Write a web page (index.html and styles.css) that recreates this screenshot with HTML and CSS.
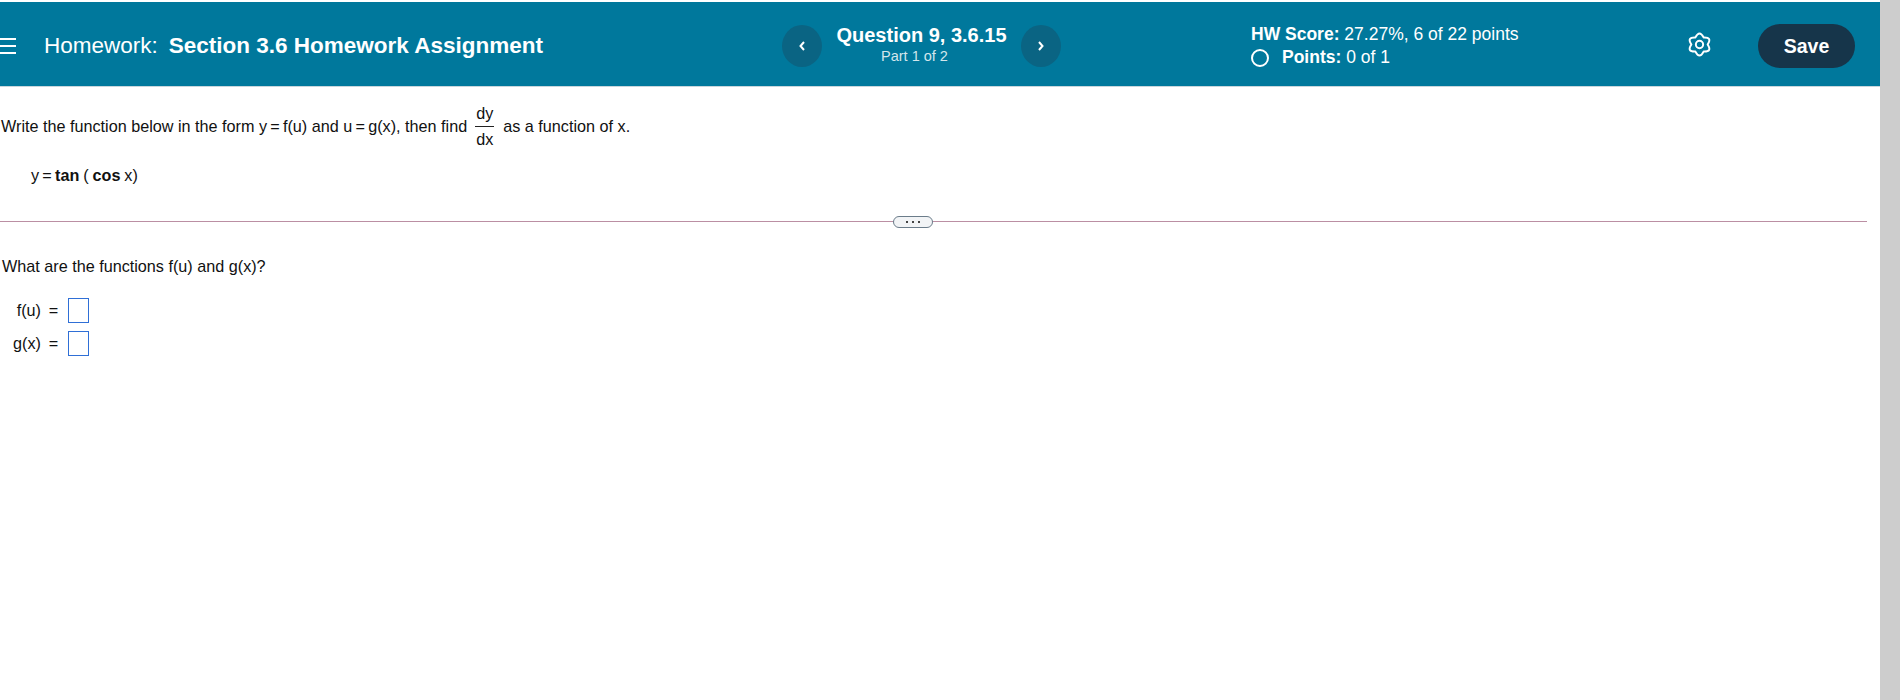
FILE: index.html
```html
<!DOCTYPE html>
<html lang="en">
<head>
    <meta charset="UTF-8">
    <title>Section 3.6 Homework Assignment</title>
    <link rel="stylesheet" href="styles.css">
</head>
<body>
    <div class="page">
        <header class="topbar">
            <div class="menu-icon"><span></span><span></span><span></span></div>
            <div class="hw-title">Homework:<strong>Section 3.6 Homework Assignment</strong></div>
            <nav class="question-nav">
                <button class="nav-btn">
                    <svg width="10" height="12" viewBox="0 0 10 12"><path d="M7 2 L3.5 6 L7 10" fill="none" stroke="#fff" stroke-width="2"/></svg>
                </button>
                <div class="question-info">
                    <div class="question-name">Question 9, 3.6.15</div>
                    <div class="question-part">Part 1 of 2</div>
                </div>
                <button class="nav-btn">
                    <svg width="10" height="12" viewBox="0 0 10 12"><path d="M3 2 L6.5 6 L3 10" fill="none" stroke="#fff" stroke-width="2"/></svg>
                </button>
            </nav>
            <div class="score">
                <div><strong>HW Score:</strong> 27.27%, 6 of 22 points</div>
                <div class="points"><span class="ring"></span><span><strong>Points:</strong> 0 of 1</span></div>
            </div>
            <svg class="gear" width="25" height="25" viewBox="0 0 24 24" fill="none" stroke="#fff" stroke-width="1.9" stroke-linejoin="round">
                <path d="M8.1 5.2 Q12 -2.5 15.9 5.2 Q24.5 4.8 19.8 12 Q24.5 19.2 15.9 18.8 Q12 26.5 8.1 18.8 Q-0.5 19.2 4.2 12 Q-0.5 4.8 8.1 5.2 Z"/>
                <circle cx="12" cy="12" r="3.5"/>
            </svg>
            <button class="save-btn">Save</button>
        </header>

        <section class="question">
            <div class="prompt">
                <span>Write the function below in the form y&#8201;=&#8201;f(u) and u&#8201;=&#8201;g(x), then find</span>
                <span class="frac"><span class="frac-top">dy</span><span>dx</span></span>
                <span>as a function of x.</span>
            </div>
            <div class="formula">y&#8201;=&#8201;<b>tan</b> ( <b>cos</b> x)</div>
        </section>

        <div class="divider"><button class="dots"><i></i><i></i><i></i></button></div>

        <section class="answer">
            <p class="ask">What are the functions f(u) and g(x)?</p>
            <div class="answer-row"><span class="answer-label">f(u)</span><span class="eq">=</span><span class="answer-box"></span></div>
            <div class="answer-row"><span class="answer-label">g(x)</span><span class="eq">=</span><span class="answer-box"></span></div>
        </section>
    </div>
    <div class="scrollbar"></div>
</body>
</html>
```

FILE: styles.css
```css
html, body {
    height: 100%;
}

body {
    margin: 0;
    display: flex;
    overflow: hidden;
    background-color: #fff;
    color: #111;
    font-family: 'Liberation Sans', Arial, sans-serif;
    font-size: 16.2px;
}

.page {
    width: 1880px;
    padding-top: 2px;
}

.scrollbar {
    width: 20px;
    background-color: #cdcdcd;
}

.topbar {
    height: 85px;
    padding-top: 4px;
    box-sizing: border-box;
    display: flex;
    align-items: center;
    background-color: #00789c;
    color: #fff;
    border-bottom: 1px solid #c9d6dc;
}

.menu-icon {
    width: 16px;
    display: flex;
    flex-direction: column;
    gap: 5px;
}

.menu-icon span {
    height: 2px;
    background-color: #fff;
}

.hw-title {
    width: 738px;
    margin-left: 28px;
    font-size: 22.5px;
}

.hw-title strong {
    margin-left: 11px;
}

.question-nav {
    width: 279px;
    display: flex;
    align-items: center;
    justify-content: space-between;
}

.nav-btn {
    width: 40px;
    height: 42px;
    padding: 0;
    border: none;
    border-radius: 50%;
    background-color: #0a6483;
    display: flex;
    align-items: center;
    justify-content: center;
}

.question-info {
    margin-top: -5px;
    text-align: center;
}

.question-name {
    font-size: 20px;
    font-weight: bold;
    line-height: 24px;
}

.question-part {
    padding-right: 14px;
    font-size: 14.5px;
    line-height: 18px;
    color: #d4e6ec;
}

.score {
    width: 436px;
    margin-left: 190px;
    font-size: 17.5px;
    line-height: 23px;
}

.points {
    display: flex;
    align-items: center;
    gap: 13px;
}

.ring {
    width: 14px;
    height: 14px;
    border: 2px solid #fff;
    border-radius: 50%;
}

.gear {
    flex-shrink: 0;
    margin-top: -3px;
}

.save-btn {
    width: 97px;
    height: 44px;
    margin-left: 46px;
    border: none;
    border-radius: 22px;
    background-color: #16354a;
    color: #fff;
    font-family: inherit;
    font-size: 19.5px;
    font-weight: bold;
}

.question {
    padding: 17px 0 0 1px;
}

.prompt {
    display: flex;
    align-items: center;
    gap: 6px;
}

.frac {
    display: inline-flex;
    flex-direction: column;
    align-items: center;
    margin: 0 3px 0 2px;
}

.frac-top {
    padding: 0 1px 3px;
    border-bottom: 1px solid #222;
    margin-bottom: 3px;
}

.formula {
    margin: 17px 0 0 30px;
    word-spacing: -0.6px;
}

.formula b {
    font-weight: bold;
}

.divider {
    position: relative;
    width: 1867px;
    height: 1px;
    margin-top: 36px;
    background-color: #bb8fa3;
}

.dots {
    position: absolute;
    left: 893px;
    top: -5px;
    width: 40px;
    height: 12px;
    padding: 0;
    border: 1px solid #6b7c8a;
    border-radius: 6px;
    background-color: #f2f4f6;
    display: flex;
    align-items: center;
    justify-content: center;
    gap: 4px;
}

.dots i {
    width: 2px;
    height: 2px;
    background-color: #444;
}

.answer {
    padding: 35px 0 0 2px;
}

.ask {
    margin: 0 0 22px;
}

.answer-row {
    display: flex;
    align-items: center;
    height: 25px;
    margin-bottom: 8px;
}

.answer-label {
    width: 39px;
    text-align: right;
}

.eq {
    width: 27px;
    padding-right: 2px;
    box-sizing: border-box;
    text-align: center;
}

.answer-box {
    width: 19px;
    height: 23px;
    border: 1px solid #2f6fd6;
}
```
